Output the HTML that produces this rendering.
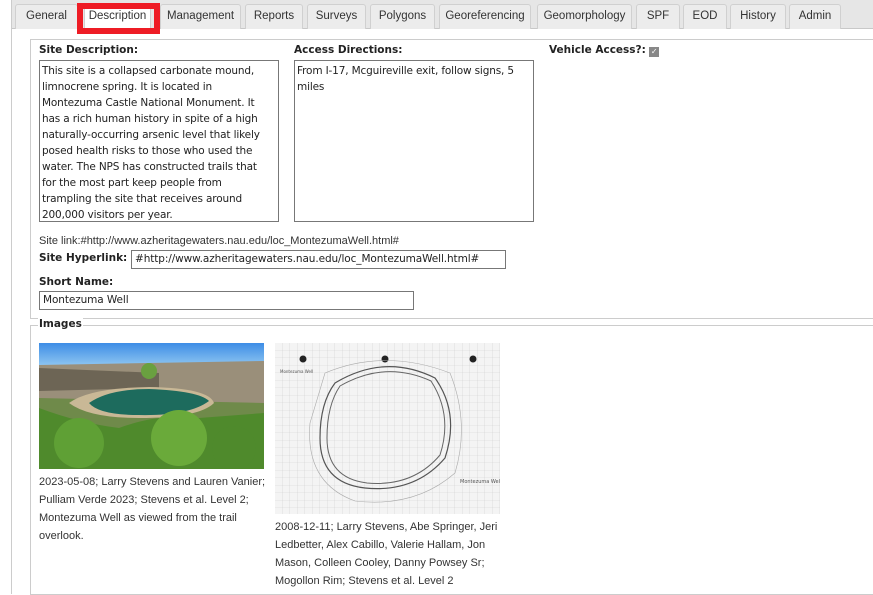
<!DOCTYPE html>
<html><head><meta charset="utf-8"><style>
*{box-sizing:border-box}
body{margin:0;width:873px;height:594px;background:#fff;font-family:"DejaVu Sans","Liberation Sans",sans-serif;font-size:10.5px;color:#222;position:relative;overflow:hidden}
.abs{position:absolute;white-space:nowrap}
.tabbar{left:12px;top:0;width:861px;height:29px;background:#e6e6e6;border-bottom:1px solid #c8c8c8}
.tab{position:absolute;top:4px;height:25px;background:#ececec;border:1px solid #d0d0d0;border-bottom:none;border-radius:3px 3px 0 0;font-family:"Liberation Sans",Arial,sans-serif;font-size:11.5px;color:#333;text-align:center;line-height:23px}
.tab.sel{background:#fff}
b{font-weight:bold}
.ta{position:absolute;border:1px solid #777;padding:2px 2px;line-height:16px;font-size:10.5px;letter-spacing:-0.15px;color:#222;white-space:nowrap;overflow:hidden}
.inp{position:absolute;border:1px solid #777;padding:0 3px;font-size:10.5px;letter-spacing:-0.1px;line-height:17px;white-space:nowrap;overflow:hidden}
.cap{position:absolute;font-family:"Liberation Sans",Arial,sans-serif;font-size:11px;line-height:18px;color:#333}
</style></head><body>
<div class="abs" style="left:11px;top:0;width:1px;height:594px;background:#ccc"></div>
<div class="abs tabbar"></div>
<div class="tab" style="left:15px;width:63px">General</div>
<div class="tab sel" style="left:84px;width:67px">Description</div>
<div class="tab" style="left:160px;width:81px">Management</div>
<div class="tab" style="left:245px;width:58px">Reports</div>
<div class="tab" style="left:307px;width:59px">Surveys</div>
<div class="tab" style="left:370px;width:65px">Polygons</div>
<div class="tab" style="left:439px;width:92px">Georeferencing</div>
<div class="tab" style="left:537px;width:95px">Geomorphology</div>
<div class="tab" style="left:636px;width:44px">SPF</div>
<div class="tab" style="left:683px;width:44px">EOD</div>
<div class="tab" style="left:730px;width:56px">History</div>
<div class="tab" style="left:789px;width:52px">Admin</div>
<div class="abs" style="left:77px;top:3px;width:83px;height:31px;border:6px solid #ee1c25"></div>

<div class="abs" style="left:30px;top:39px;width:850px;height:280px;border:1px solid #ccc"></div>
<div class="abs" style="left:39px;top:44px"><b>Site Description:</b></div>
<div class="abs" style="left:294px;top:44px"><b>Access Directions:</b></div>
<div class="abs" style="left:549px;top:44px"><b>Vehicle Access?:</b> <span style="display:inline-block;width:10px;height:10px;background:#888;color:#fff;font-size:8px;line-height:10px;text-align:center;vertical-align:-1px">✓</span></div>
<div class="ta" style="left:39px;top:60px;width:240px;height:162px">This site is a collapsed carbonate mound,<br>limnocrene spring. It is located in<br>Montezuma Castle National Monument. It<br>has a rich human history in spite of a high<br>naturally-occurring arsenic level that likely<br>posed health risks to those who used the<br>water. The NPS has constructed trails that<br>for the most part keep people from<br>trampling the site that receives around<br>200,000 visitors per year.</div>
<div class="ta" style="left:294px;top:60px;width:240px;height:162px">From I-17, Mcguireville exit, follow signs, 5<br>miles</div>
<div class="abs" style="left:39px;top:235px;font-family:'Liberation Sans',Arial,sans-serif;font-size:11px;color:#333">Site link:#http://www.azheritagewaters.nau.edu/loc_MontezumaWell.html#</div>
<div class="abs" style="left:39px;top:252px"><b>Site Hyperlink:</b></div>
<div class="inp" style="left:131px;top:250px;width:375px;height:19px">#http://www.azheritagewaters.nau.edu/loc_MontezumaWell.html#</div>
<div class="abs" style="left:39px;top:276px"><b>Short Name:</b></div>
<div class="inp" style="left:39px;top:291px;width:375px;height:19px">Montezuma Well</div>

<div class="abs" style="left:30px;top:325px;width:850px;height:270px;border:1px solid #ccc"></div>
<div class="abs" style="left:38px;top:318px;background:#fff;padding:0 1px"><b>Images</b></div>

<svg class="abs" style="left:39px;top:343px" width="225" height="126" viewBox="0 0 225 126">
<defs><linearGradient id="sk" x1="0" y1="0" x2="0" y2="1"><stop offset="0" stop-color="#3d8de6"/><stop offset="1" stop-color="#8cc4f0"/></linearGradient></defs>
<rect width="225" height="126" fill="#6f8a4a"/>
<rect width="225" height="22" fill="url(#sk)"/>
<path d="M0 22 L225 18 L225 60 L0 55Z" fill="#9a8f7a"/>
<path d="M0 25 L120 30 L120 45 L0 48Z" fill="#6d6555"/>
<path d="M30 60 Q50 45 110 44 Q170 45 175 60 Q160 75 100 75 Q50 75 30 60Z" fill="#c9b896"/>
<path d="M50 60 Q70 46 110 46 Q160 48 170 58 Q150 73 100 72 Q60 72 50 60Z" fill="#1d6b5d"/>
<path d="M0 65 Q40 80 80 85 Q120 70 160 75 L225 70 L225 126 L0 126Z" fill="#4f8a2c"/>
<circle cx="40" cy="100" r="25" fill="#5fa035"/><circle cx="140" cy="95" r="28" fill="#6aaa3a"/><circle cx="195" cy="105" r="22" fill="#4f8a2c"/>
<circle cx="110" cy="28" r="8" fill="#6aa040"/>
</svg>
<div class="cap" style="left:39px;top:473px;width:230px">2023-05-08; Larry Stevens and Lauren Vanier; Pulliam Verde 2023; Stevens et al. Level 2; Montezuma Well as viewed from the trail overlook.</div>

<svg class="abs" style="left:275px;top:343px" width="225" height="171" viewBox="0 0 225 171">
<defs><pattern id="g" width="7.5" height="7.5" patternUnits="userSpaceOnUse"><path d="M7.5 0V7.5H0" fill="none" stroke="#cfcfcf" stroke-width=".6"/></pattern></defs>
<rect width="225" height="171" fill="#f4f4f4"/><rect width="225" height="171" fill="url(#g)"/>
<circle cx="28" cy="16" r="3.5" fill="#222"/><circle cx="110" cy="16" r="3.5" fill="#222"/><circle cx="198" cy="16" r="3.5" fill="#222"/>
<path d="M60 40 Q110 10 160 35 Q185 70 170 115 Q140 150 90 145 Q45 140 45 95 Q45 60 60 40Z" fill="none" stroke="#555" stroke-width="1.2"/>
<path d="M65 43 Q110 17 156 38 Q178 72 165 112 Q138 144 92 140 Q52 135 52 95 Q52 62 65 43Z" fill="none" stroke="#666" stroke-width="1"/>
<path d="M50 30 Q110 5 175 30 Q195 80 180 130 Q140 165 80 158 Q30 140 35 80Z" fill="none" stroke="#aaa" stroke-width=".6"/>
<text x="5" y="30" font-size="4" fill="#555">Montezuma Well</text>
<text x="185" y="140" font-size="5" fill="#555">Montezuma Well</text>
</svg>
<div class="cap" style="left:275px;top:518px;width:230px">2008-12-11; Larry Stevens, Abe Springer, Jeri Ledbetter, Alex Cabillo, Valerie Hallam, Jon Mason, Colleen Cooley, Danny Powsey Sr; Mogollon Rim; Stevens et al. Level 2</div>
</body></html>
